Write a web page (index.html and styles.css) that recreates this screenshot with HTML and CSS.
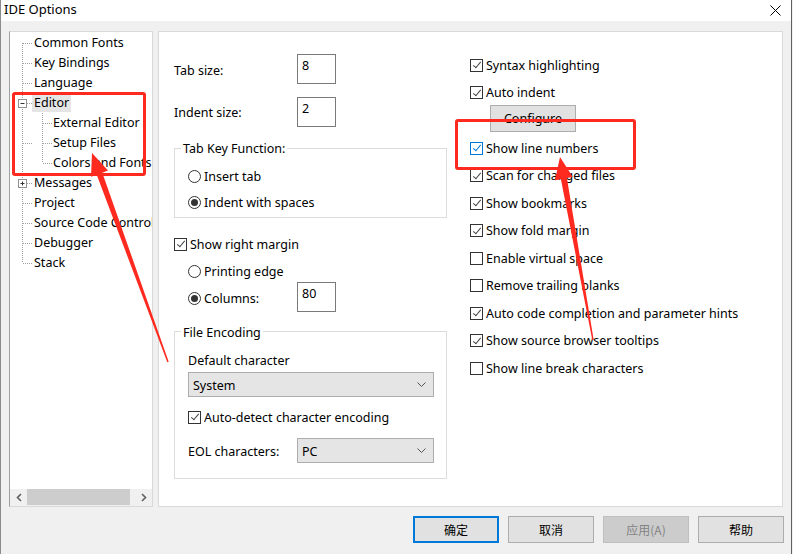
FILE: index.html
```html
<!DOCTYPE html>
<html lang="zh-CN">

<head>
    <meta charset="UTF-8">
    <meta name="viewport" content="width=device-width, initial-scale=1.0">
    <title>IDE Options</title>
    <link rel="stylesheet" href="styles.css">
</head>

<body>
    <div class="window">
        <div class="titlebar">
            <span class="title">IDE Options</span>
            <svg class="close" width="11" height="11" viewBox="0 0 11 11">
                <path d="M0.5 0.5L10.5 10.5M10.5 0.5L0.5 10.5" stroke="#000" stroke-width="1" fill="none" />
            </svg>
        </div>

        <div class="content">
            <!-- дерево разделов -->
            <div class="tree">
                <svg class="tree_lines" width="60" height="240" viewBox="0 0 60 240">
                    <g stroke="#a0a0a0" stroke-width="1" stroke-dasharray="1 1" fill="none">
                        <path d="M12.5 10V230" />
                        <path d="M13 10.5H22M13 30.5H22M13 50.5H22M17 70.5H22M13 110.5H22M17 150.5H22M13 170.5H22M13 190.5H22M13 210.5H22M13 230.5H22" />
                        <path d="M32.5 80V130M33 90.5H42M33 110.5H42M33 130.5H42" />
                    </g>
                    <g stroke="#919191" fill="#fff">
                        <rect x="8.5" y="66.5" width="8" height="8" />
                        <rect x="8.5" y="146.5" width="8" height="8" />
                    </g>
                    <path d="M10.5 70.5H14.5M10.5 150.5H14.5M12.5 148.5V152.5" stroke="#333" fill="none" />
                </svg>
                <ul class="tree_list">
                    <li>Common Fonts</li>
                    <li>Key Bindings</li>
                    <li>Language</li>
                    <li><span class="tree_sel">Editor</span></li>
                    <li class="sub">External Editor</li>
                    <li class="sub">Setup Files</li>
                    <li class="sub">Colors and Fonts</li>
                    <li>Messages</li>
                    <li>Project</li>
                    <li>Source Code Control</li>
                    <li>Debugger</li>
                    <li>Stack</li>
                </ul>
                <div class="hscroll">
                    <div class="hscroll_btn">
                        <svg width="6" height="9" viewBox="0 0 6 9"><path d="M5 1L1.5 4.5L5 8" stroke="#606060" stroke-width="1.6" fill="none" /></svg>
                    </div>
                    <div class="hscroll_thumb"></div>
                    <div class="hscroll_space"></div>
                    <div class="hscroll_btn">
                        <svg width="6" height="9" viewBox="0 0 6 9"><path d="M1 1L4.5 4.5L1 8" stroke="#606060" stroke-width="1.6" fill="none" /></svg>
                    </div>
                </div>
            </div>

            <!-- настройки редактора -->
            <div class="options">
                <div class="col_left">
                    <div class="field_row">
                        <span class="field_label">Tab size:</span>
                        <div class="num">8</div>
                    </div>
                    <div class="field_row">
                        <span class="field_label">Indent size:</span>
                        <div class="num">2</div>
                    </div>

                    <fieldset class="group">
                        <legend>Tab Key Function:</legend>
                        <div class="group_body group_tab">
                            <div class="opt_row"><span class="radio"></span>Insert tab</div>
                            <div class="opt_row"><span class="radio on"></span>Indent with spaces</div>
                        </div>
                    </fieldset>

                    <div class="opt_row margin_row"><span class="chk on"></span>Show right margin</div>
                    <div class="opt_row sub_row"><span class="radio"></span>Printing edge</div>
                    <div class="field_row sub_row columns_row">
                        <span class="field_label short"><span class="radio on"></span>Columns:</span>
                        <div class="num">80</div>
                    </div>

                    <fieldset class="group group_second">
                        <legend>File Encoding</legend>
                        <div class="group_body group_enc">
                            <div class="label_row">Default character</div>
                            <div class="select">System
                                <svg width="9" height="5" viewBox="0 0 9 5"><path d="M0.5 0.5L4.5 4.5L8.5 0.5" stroke="#555" fill="none" /></svg>
                            </div>
                            <div class="opt_row detect_row"><span class="chk on"></span>Auto-detect character encoding</div>
                            <div class="eol_row">
                                <span class="field_label short">EOL characters:</span>
                                <div class="select">PC
                                    <svg width="9" height="5" viewBox="0 0 9 5"><path d="M0.5 0.5L4.5 4.5L8.5 0.5" stroke="#555" fill="none" /></svg>
                                </div>
                            </div>
                        </div>
                    </fieldset>
                </div>

                <div class="col_right">
                    <div class="chk_row first"><span class="chk on"></span>Syntax highlighting</div>
                    <div class="chk_row indent_row"><span class="chk on"></span>Auto indent</div>
                    <div class="btn_configure">Configure</div>
                    <div class="chk_row after_btn"><span class="chk on focus"></span>Show line numbers</div>
                    <div class="chk_row"><span class="chk on"></span>Scan for changed files</div>
                    <div class="chk_row"><span class="chk on"></span>Show bookmarks</div>
                    <div class="chk_row"><span class="chk on"></span>Show fold margin</div>
                    <div class="chk_row"><span class="chk"></span>Enable virtual space</div>
                    <div class="chk_row"><span class="chk"></span>Remove trailing blanks</div>
                    <div class="chk_row"><span class="chk on"></span>Auto code completion and parameter hints</div>
                    <div class="chk_row"><span class="chk on"></span>Show source browser tooltips</div>
                    <div class="chk_row"><span class="chk"></span>Show line break characters</div>
                </div>
            </div>
        </div>

        <div class="buttons">
            <div class="btn default">确定</div>
            <div class="btn">取消</div>
            <div class="btn disabled">应用(A)</div>
            <div class="btn">帮助</div>
        </div>
    </div>

    <!-- красные пометки поверх скриншота -->
    <svg class="marks" width="793" height="554" viewBox="0 0 793 554">
        <g fill="none" stroke="#ff2a1f" stroke-width="3">
            <rect x="13.5" y="93.5" width="131" height="81" rx="1.5" />
            <rect x="456.5" y="120.5" width="178" height="48" rx="1.5" />
        </g>
        <g fill="#ff2a1f">
            <polygon points="92,153 108,170.6 102.3,172.7 168.7,361.8 167.3,362.2 96.7,174.7 91,176.8" />
            <polygon points="560,157 572.8,177 566.9,178.1 593.7,339.9 592.3,340.1 560.9,179.2 555,180.3" />
        </g>
    </svg>
</body>

</html>
```

FILE: styles.css
```css
* {
    box-sizing: border-box;
}

body {
    margin: 0;
    width: 793px;
    height: 554px;
    overflow: hidden;
    position: relative;
    background-color: #f0f0f0;
    font-family: "Noto Sans", "Noto Sans CJK SC", sans-serif;
    font-size: 12.5px;
    color: #000;
}

.window {
    width: 792px;
    height: 554px;
    border-left: 1px solid #8c8c8c;
    border-right: 1px solid #5f5f5f;
}

.titlebar {
    height: 21px;
    background-color: #fff;
    display: flex;
    align-items: center;
    justify-content: space-between;
    padding: 0 10px 3px 3px;
}

.titlebar .title {
    font-size: 13px;
}

.titlebar .close {
    margin-top: 3px;
}

.content {
    display: flex;
    gap: 5px;
    padding: 10px 0 0 8px;
}

/* дерево */
.tree {
    width: 144px;
    height: 476px;
    background-color: #fff;
    border: 1px solid #d9d9d9;
    border-left-color: #a0a0a0;
    position: relative;
    display: flex;
    flex-direction: column;
    overflow: hidden;
}

.tree .tree_lines {
    position: absolute;
    left: 0;
    top: 1px;
}

.tree .tree_list {
    flex: 1;
    list-style: none;
    margin: 0;
    padding: 1px 0 0;
}

.tree .tree_list li {
    height: 20px;
    line-height: 20px;
    padding-left: 24px;
    white-space: nowrap;
}

.tree .tree_list li.sub {
    padding-left: 43px;
}

.tree .tree_sel {
    display: inline-block;
    line-height: 19px;
    margin-left: -2px;
    padding: 0 2px;
    background-color: #e5e5e5;
}

.tree .hscroll {
    height: 17px;
    display: flex;
    background-color: #f0f0f0;
}

.tree .hscroll_btn {
    width: 17px;
    display: flex;
    align-items: center;
    justify-content: center;
}

.tree .hscroll_thumb {
    width: 103px;
    height: 16px;
    background-color: #cdcdcd;
}

.tree .hscroll_space {
    flex: 1;
}

/* панель настроек */
.options {
    width: 625px;
    height: 476px;
    background-color: #fff;
    border: 1px solid #d9d9d9;
    display: flex;
    align-items: flex-start;
    gap: 23px;
    padding-left: 15px;
}

.col_left {
    width: 273px;
    padding-top: 22px;
    display: flex;
    flex-direction: column;
}

.field_row {
    display: flex;
    align-items: center;
    height: 30px;
}

.field_row + .field_row {
    margin-top: 13px;
}

.field_label {
    width: 123px;
    display: flex;
    align-items: center;
    padding-top: 2px;
}

.field_row + .field_row .field_label {
    padding-top: 0;
}

.field_label.short {
    width: 109px;
}

.num {
    width: 39px;
    height: 30px;
    border: 1px solid #7a7a7a;
    padding: 3px 0 0 4px;
    line-height: 16px;
}

.group {
    margin: 12px 0 0;
    padding: 0;
    border: 1px solid #dcdcdc;
    min-width: 0;
}

.group_second {
    margin-top: 10px;
}

.group legend {
    margin-left: 6px;
    padding: 2px 2px 0;
    line-height: 16px;
}

.group_second legend {
    padding-top: 3px;
}

.group_tab {
    padding: 6px 0 2px 13px;
}

.group_enc {
    padding: 9px 12px 15px 13px;
}

.opt_row {
    height: 26px;
    display: flex;
    align-items: center;
    white-space: nowrap;
}

.margin_row {
    margin-top: 13px;
}

.sub_row {
    padding-left: 14px;
}

.opt_row.sub_row {
    margin-top: 1px;
}

.columns_row {
    margin-top: -2px;
}

.label_row {
    line-height: 18px;
    padding-top: 2px;
}

.select {
    margin-top: 2px;
    height: 25px;
    background-color: #e5e5e5;
    border: 1px solid #adadad;
    display: flex;
    align-items: center;
    justify-content: space-between;
    padding: 2px 4px 0 4px;
}

.select svg {
    margin-right: 3px;
    margin-top: -2px;
}

.detect_row {
    height: 20px;
    margin-top: 10px;
}

.eol_row {
    margin-top: 11px;
    display: flex;
    align-items: center;
}

.eol_row .field_label {
    padding-top: 1px;
}

.eol_row .select {
    margin-top: 0;
    flex: 1;
}

/* правая колонка */
.col_right {
    padding-top: 19.5px;
    display: flex;
    flex-direction: column;
}

.chk_row {
    height: 27.5px;
    display: flex;
    align-items: center;
    white-space: nowrap;
}

.chk_row.indent_row {
    height: 25.5px;
    padding-top: 2px;
}

.chk_row.after_btn {
    margin-top: 3px;
}

.btn_configure {
    margin-left: 20px;
    width: 86px;
    height: 27px;
    background-color: #e1e1e1;
    border: 1px solid #adadad;
    display: flex;
    align-items: center;
    justify-content: center;
}

/* чекбоксы и радио */
.chk {
    position: relative;
    width: 13px;
    height: 13px;
    border: 1px solid #333;
    background-color: #fff;
    margin-right: 3px;
    flex: none;
}

.chk.on::after {
    content: "";
    position: absolute;
    left: 3.5px;
    top: 0.5px;
    width: 3px;
    height: 7px;
    border: solid #444;
    border-width: 0 1.3px 1.3px 0;
    transform: rotate(40deg);
}

.chk.focus {
    border-color: #0078d7;
}

.chk.focus::after {
    border-color: #0078d7;
}

.radio {
    position: relative;
    width: 13px;
    height: 13px;
    border: 1px solid #333;
    border-radius: 50%;
    background-color: #fff;
    margin-right: 3px;
    flex: none;
}

.radio.on::after {
    content: "";
    position: absolute;
    left: 2px;
    top: 2px;
    width: 7px;
    height: 7px;
    border-radius: 50%;
    background-color: #333;
}

/* кнопки внизу */
.buttons {
    display: flex;
    justify-content: flex-end;
    gap: 9px;
    margin-top: 9px;
    padding-right: 7px;
}

.btn {
    width: 86px;
    height: 27px;
    background-color: #e1e1e1;
    border: 1px solid #adadad;
    display: flex;
    align-items: center;
    justify-content: center;
    font-family: "Noto Sans CJK SC", sans-serif;
    font-size: 12px;
}

.btn.default {
    border: 2px solid #0078d7;
}

.btn.disabled {
    background-color: #cccccc;
    border-color: #bfbfbf;
    color: #838383;
}

.marks {
    position: absolute;
    left: 0;
    top: 0;
    pointer-events: none;
}
```
